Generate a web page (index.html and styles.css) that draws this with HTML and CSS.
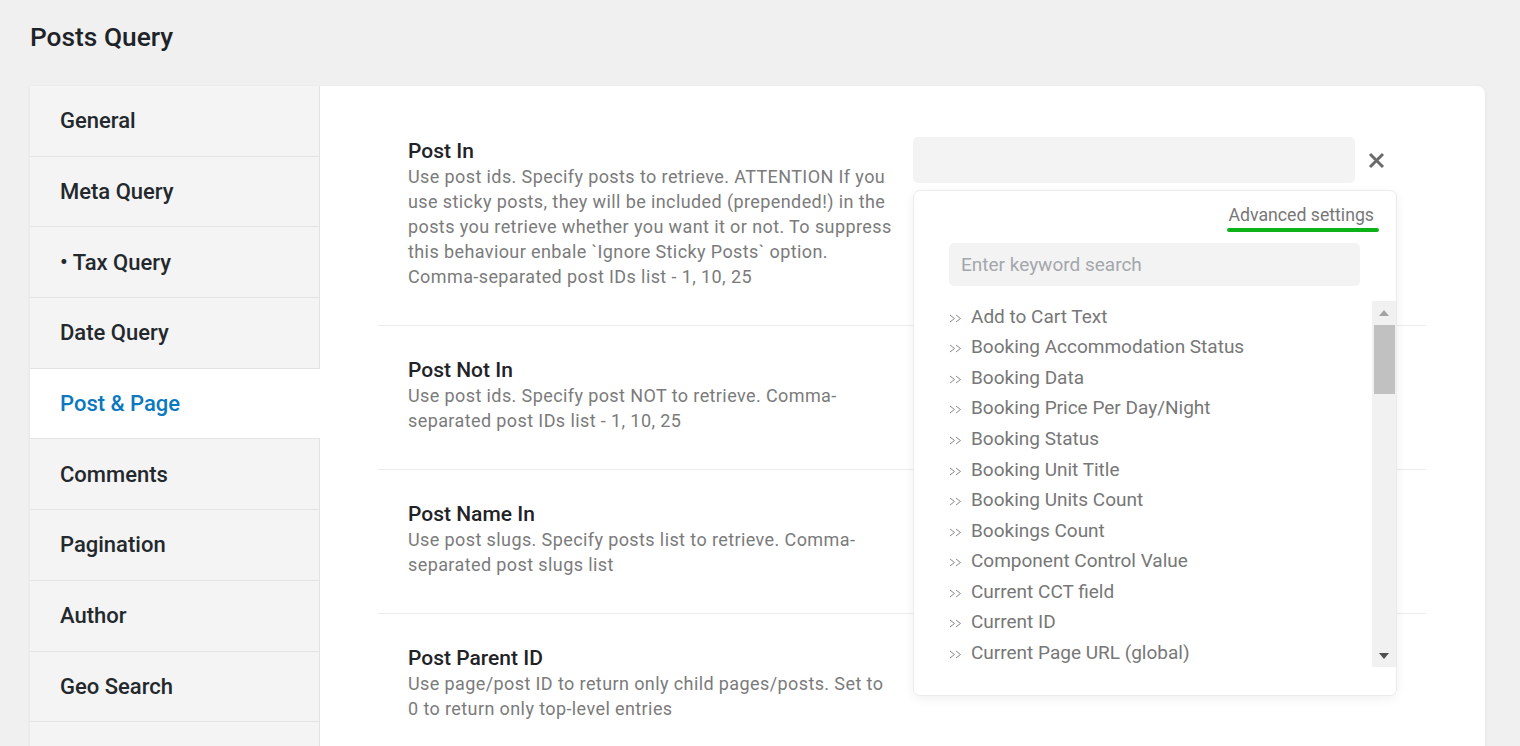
FILE: index.html
```html
<!DOCTYPE html>
<html lang="en">
<head>
    <meta charset="UTF-8">
    <meta name="viewport" content="width=device-width, initial-scale=1.0">
    <title>Posts Query</title>
    <link rel="stylesheet" href="styles.css">
</head>
<body>

    <div class="page">
        <h1 class="page-title">Posts Query</h1>

        <div class="card">
            <!-- Tabs -->
            <ul class="tabs">
                <li class="tab">General</li>
                <li class="tab">Meta Query</li>
                <li class="tab">• Tax Query</li>
                <li class="tab">Date Query</li>
                <li class="tab active">Post &amp; Page</li>
                <li class="tab">Comments</li>
                <li class="tab">Pagination</li>
                <li class="tab">Author</li>
                <li class="tab">Geo Search</li>
                <li class="tab"></li>
            </ul>

            <!-- Settings -->
            <div class="content">
                <div class="row">
                    <div class="row-info">
                        <div class="row-title">Post In</div>
                        <div class="row-desc">Use post ids. Specify posts to retrieve. ATTENTION If you use sticky posts, they will be included (prepended!) in the posts you retrieve whether you want it or not. To suppress this behaviour enbale `Ignore Sticky Posts` option. Comma-separated post IDs list - 1, 10, 25</div>
                    </div>
                    <div class="row-control">
                        <div class="text-input"></div>
                        <svg class="clear-icon" width="17" height="17" viewBox="0 0 17 17">
                            <path d="M2 2 L15 15 M15 2 L2 15" stroke="#6b6b6b" stroke-width="3" fill="none"/>
                        </svg>

                        <!-- Dynamic tags popup -->
                        <div class="dropdown">
                            <div class="dropdown-head">
                                <span class="adv-link">Advanced settings</span>
                            </div>
                            <div class="search">Enter keyword search</div>
                            <div class="list-wrap">
                                <ul class="tag-list">
                                    <li><svg class="arrows" width="13" height="9" viewBox="0 0 13 9"><path d="M1 1 L5.5 4.5 L1 8 M7 1 L11.5 4.5 L7 8" stroke="#8a8a8a" stroke-width="1" fill="none"/></svg>Add to Cart Text</li>
                                    <li><svg class="arrows" width="13" height="9" viewBox="0 0 13 9"><path d="M1 1 L5.5 4.5 L1 8 M7 1 L11.5 4.5 L7 8" stroke="#8a8a8a" stroke-width="1" fill="none"/></svg>Booking Accommodation Status</li>
                                    <li><svg class="arrows" width="13" height="9" viewBox="0 0 13 9"><path d="M1 1 L5.5 4.5 L1 8 M7 1 L11.5 4.5 L7 8" stroke="#8a8a8a" stroke-width="1" fill="none"/></svg>Booking Data</li>
                                    <li><svg class="arrows" width="13" height="9" viewBox="0 0 13 9"><path d="M1 1 L5.5 4.5 L1 8 M7 1 L11.5 4.5 L7 8" stroke="#8a8a8a" stroke-width="1" fill="none"/></svg>Booking Price Per Day/Night</li>
                                    <li><svg class="arrows" width="13" height="9" viewBox="0 0 13 9"><path d="M1 1 L5.5 4.5 L1 8 M7 1 L11.5 4.5 L7 8" stroke="#8a8a8a" stroke-width="1" fill="none"/></svg>Booking Status</li>
                                    <li><svg class="arrows" width="13" height="9" viewBox="0 0 13 9"><path d="M1 1 L5.5 4.5 L1 8 M7 1 L11.5 4.5 L7 8" stroke="#8a8a8a" stroke-width="1" fill="none"/></svg>Booking Unit Title</li>
                                    <li><svg class="arrows" width="13" height="9" viewBox="0 0 13 9"><path d="M1 1 L5.5 4.5 L1 8 M7 1 L11.5 4.5 L7 8" stroke="#8a8a8a" stroke-width="1" fill="none"/></svg>Booking Units Count</li>
                                    <li><svg class="arrows" width="13" height="9" viewBox="0 0 13 9"><path d="M1 1 L5.5 4.5 L1 8 M7 1 L11.5 4.5 L7 8" stroke="#8a8a8a" stroke-width="1" fill="none"/></svg>Bookings Count</li>
                                    <li><svg class="arrows" width="13" height="9" viewBox="0 0 13 9"><path d="M1 1 L5.5 4.5 L1 8 M7 1 L11.5 4.5 L7 8" stroke="#8a8a8a" stroke-width="1" fill="none"/></svg>Component Control Value</li>
                                    <li><svg class="arrows" width="13" height="9" viewBox="0 0 13 9"><path d="M1 1 L5.5 4.5 L1 8 M7 1 L11.5 4.5 L7 8" stroke="#8a8a8a" stroke-width="1" fill="none"/></svg>Current CCT field</li>
                                    <li><svg class="arrows" width="13" height="9" viewBox="0 0 13 9"><path d="M1 1 L5.5 4.5 L1 8 M7 1 L11.5 4.5 L7 8" stroke="#8a8a8a" stroke-width="1" fill="none"/></svg>Current ID</li>
                                    <li><svg class="arrows" width="13" height="9" viewBox="0 0 13 9"><path d="M1 1 L5.5 4.5 L1 8 M7 1 L11.5 4.5 L7 8" stroke="#8a8a8a" stroke-width="1" fill="none"/></svg>Current Page URL (global)</li>
                                </ul>
                                <div class="scrollbar">
                                    <div class="scroll-btn"><span class="tri-up"></span></div>
                                    <div class="scroll-thumb"></div>
                                    <div class="scroll-space"></div>
                                    <div class="scroll-btn"><span class="tri-down"></span></div>
                                </div>
                            </div>
                        </div>
                    </div>
                </div>

                <div class="row">
                    <div class="row-info">
                        <div class="row-title">Post Not In</div>
                        <div class="row-desc">Use post ids. Specify post NOT to retrieve. Comma-separated post IDs list - 1, 10, 25</div>
                    </div>
                </div>

                <div class="row">
                    <div class="row-info">
                        <div class="row-title">Post Name In</div>
                        <div class="row-desc">Use post slugs. Specify posts list to retrieve. Comma-separated post slugs list</div>
                    </div>
                </div>

                <div class="row">
                    <div class="row-info">
                        <div class="row-title">Post Parent ID</div>
                        <div class="row-desc">Use page/post ID to return only child pages/posts. Set to 0 to return only top-level entries</div>
                    </div>
                </div>
            </div>
        </div>
    </div>

</body>
</html>
```

FILE: styles.css
```css
body {
    margin: 0;
    background: #f0f0f0;
    font-family: Roboto, "Liberation Sans", sans-serif;
    color: #23282d;
    overflow: hidden;
}

.page {
    padding: 0 35px 0 30px;
}

.page-title {
    margin: 0;
    padding-top: 22px;
    font-size: 26.3px;
    line-height: 30px;
    font-weight: 500;
    color: #1d2327;
}

.card {
    display: flex;
    margin-top: 34px;
    background: #fff;
    border-radius: 0 8px 0 0;
    box-shadow: 0 1px 4px rgba(0, 0, 0, 0.06);
}

/* Tabs column */
.tabs {
    list-style: none;
    margin: 0;
    padding: 0;
    width: 289px;
    flex-shrink: 0;
    background: #f4f4f4;
    border-right: 1px solid #e2e2e2;
}

.tab {
    display: flex;
    align-items: center;
    height: 69.7px;
    padding-left: 30px;
    border-bottom: 1px solid #e4e4e4;
    font-size: 22px;
    font-weight: 500;
    color: #23282d;
}

.tab.active {
    background: #fff;
    color: #0b78bf;
    margin-right: -1px;
}

/* Settings rows */
.content {
    flex: 1;
    padding: 21px 59px 0 58px;
}

.row {
    display: flex;
    padding: 32px 30px 36px;
    border-bottom: 1px solid #ececec;
}

.row-info {
    width: 489px;
    flex-shrink: 0;
}

.row-title {
    font-size: 21px;
    line-height: 25px;
    font-weight: 500;
    color: #1f2327;
}

.row-desc {
    font-size: 18px;
    line-height: 25px;
    letter-spacing: 0.4px;
    color: #7b7b7b;
}

.row-control {
    position: relative;
    display: flex;
    align-items: flex-start;
    margin-left: 16px;
    margin-top: -2px;
}

.text-input {
    width: 442px;
    height: 46px;
    background: #f3f3f3;
    border-radius: 5px;
}

.clear-icon {
    margin: 15px 0 0 13px;
}

/* Dynamic tags popup */
.dropdown {
    position: absolute;
    top: 53px;
    left: 0;
    width: 482px;
    padding: 12px 0 28px;
    background: #fff;
    border: 1px solid #ebebeb;
    border-radius: 7px;
    box-shadow: 0 3px 12px rgba(0, 0, 0, 0.06);
    z-index: 2;
}

.dropdown-head {
    text-align: right;
    padding-right: 22px;
    line-height: 24px;
}

.adv-link {
    position: relative;
    display: inline-block;
    font-size: 17.7px;
    color: #777;
}

.adv-link::after {
    content: "";
    position: absolute;
    left: -1px;
    right: -5px;
    bottom: -5px;
    height: 4px;
    border-radius: 2px;
    background: #0bb318;
}

.search {
    margin: 15px 36px 0 35px;
    height: 43px;
    line-height: 43px;
    padding: 0 12px;
    background: #f3f3f3;
    border-radius: 5px;
    font-size: 19px;
    color: #a4a7ab;
}

.list-wrap {
    display: flex;
    height: 366px;
    margin: 15px 0 0 35px;
}

.tag-list {
    flex: 1;
    list-style: none;
    margin: 0;
    padding: 0;
    overflow: hidden;
}

.tag-list li {
    display: flex;
    align-items: center;
    height: 30.55px;
    font-size: 19px;
    color: #777;
    white-space: nowrap;
}

.arrows {
    margin: 4px 9px 0 0;
    flex-shrink: 0;
}

/* Fake scrollbar */
.scrollbar {
    width: 24px;
    display: flex;
    flex-direction: column;
    background: #f1f1f1;
}

.scroll-btn {
    height: 24px;
    display: flex;
    align-items: center;
    justify-content: center;
}

.scroll-thumb {
    height: 69px;
    margin: 0 1px 0 2px;
    background: #c1c1c1;
}

.scroll-space {
    flex: 1;
}

.tri-up {
    width: 0;
    height: 0;
    border-left: 5.5px solid transparent;
    border-right: 5.5px solid transparent;
    border-bottom: 6px solid #a3a3a3;
}

.tri-down {
    width: 0;
    height: 0;
    border-left: 5.5px solid transparent;
    border-right: 5.5px solid transparent;
    border-top: 6px solid #505050;
    margin-top: 2px;
}
```
